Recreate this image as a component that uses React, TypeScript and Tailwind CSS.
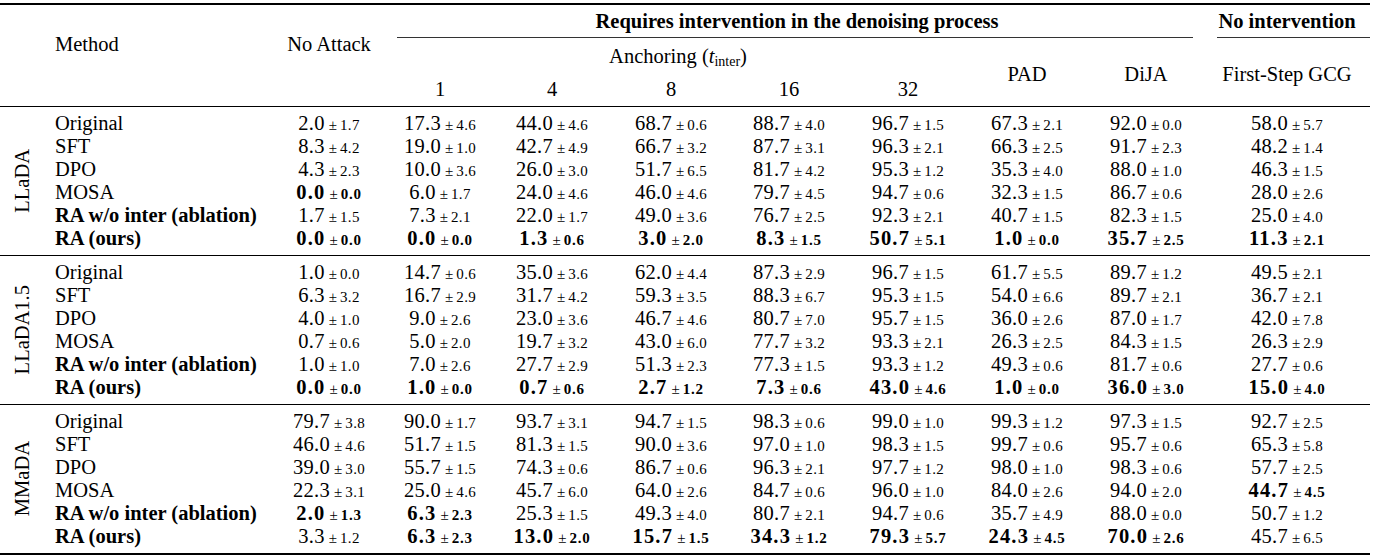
type Row = { name: string; bold?: boolean; vals: string[] };
type Group = { label: string; rows: Row[] };

const groups: Group[] = [
  {
    label: "LLaDA",
    rows: [
      { name: "Original", vals: ["2.0 1.7", "17.3 4.6", "44.0 4.6", "68.7 0.6", "88.7 4.0", "96.7 1.5", "67.3 2.1", "92.0 0.0", "58.0 5.7"] },
      { name: "SFT", vals: ["8.3 4.2", "19.0 1.0", "42.7 4.9", "66.7 3.2", "87.7 3.1", "96.3 2.1", "66.3 2.5", "91.7 2.3", "48.2 1.4"] },
      { name: "DPO", vals: ["4.3 2.3", "10.0 3.6", "26.0 3.0", "51.7 6.5", "81.7 4.2", "95.3 1.2", "35.3 4.0", "88.0 1.0", "46.3 1.5"] },
      { name: "MOSA", vals: ["*0.0 0.0", "6.0 1.7", "24.0 4.6", "46.0 4.6", "79.7 4.5", "94.7 0.6", "32.3 1.5", "86.7 0.6", "28.0 2.6"] },
      { name: "RA w/o inter (ablation)", bold: true, vals: ["1.7 1.5", "7.3 2.1", "22.0 1.7", "49.0 3.6", "76.7 2.5", "92.3 2.1", "40.7 1.5", "82.3 1.5", "25.0 4.0"] },
      { name: "RA (ours)", bold: true, vals: ["*0.0 0.0", "*0.0 0.0", "*1.3 0.6", "*3.0 2.0", "*8.3 1.5", "*50.7 5.1", "*1.0 0.0", "*35.7 2.5", "*11.3 2.1"] },
    ],
  },
  {
    label: "LLaDA1.5",
    rows: [
      { name: "Original", vals: ["1.0 0.0", "14.7 0.6", "35.0 3.6", "62.0 4.4", "87.3 2.9", "96.7 1.5", "61.7 5.5", "89.7 1.2", "49.5 2.1"] },
      { name: "SFT", vals: ["6.3 3.2", "16.7 2.9", "31.7 4.2", "59.3 3.5", "88.3 6.7", "95.3 1.5", "54.0 6.6", "89.7 2.1", "36.7 2.1"] },
      { name: "DPO", vals: ["4.0 1.0", "9.0 2.6", "23.0 3.6", "46.7 4.6", "80.7 7.0", "95.7 1.5", "36.0 2.6", "87.0 1.7", "42.0 7.8"] },
      { name: "MOSA", vals: ["0.7 0.6", "5.0 2.0", "19.7 3.2", "43.0 6.0", "77.7 3.2", "93.3 2.1", "26.3 2.5", "84.3 1.5", "26.3 2.9"] },
      { name: "RA w/o inter (ablation)", bold: true, vals: ["1.0 1.0", "7.0 2.6", "27.7 2.9", "51.3 2.3", "77.3 1.5", "93.3 1.2", "49.3 0.6", "81.7 0.6", "27.7 0.6"] },
      { name: "RA (ours)", bold: true, vals: ["*0.0 0.0", "*1.0 0.0", "*0.7 0.6", "*2.7 1.2", "*7.3 0.6", "*43.0 4.6", "*1.0 0.0", "*36.0 3.0", "*15.0 4.0"] },
    ],
  },
  {
    label: "MMaDA",
    rows: [
      { name: "Original", vals: ["79.7 3.8", "90.0 1.7", "93.7 3.1", "94.7 1.5", "98.3 0.6", "99.0 1.0", "99.3 1.2", "97.3 1.5", "92.7 2.5"] },
      { name: "SFT", vals: ["46.0 4.6", "51.7 1.5", "81.3 1.5", "90.0 3.6", "97.0 1.0", "98.3 1.5", "99.7 0.6", "95.7 0.6", "65.3 5.8"] },
      { name: "DPO", vals: ["39.0 3.0", "55.7 1.5", "74.3 0.6", "86.7 0.6", "96.3 2.1", "97.7 1.2", "98.0 1.0", "98.3 0.6", "57.7 2.5"] },
      { name: "MOSA", vals: ["22.3 3.1", "25.0 4.6", "45.7 6.0", "64.0 2.6", "84.7 0.6", "96.0 1.0", "84.0 2.6", "94.0 2.0", "*44.7 4.5"] },
      { name: "RA w/o inter (ablation)", bold: true, vals: ["*2.0 1.3", "*6.3 2.3", "25.3 1.5", "49.3 4.0", "80.7 2.1", "94.7 0.6", "35.7 4.9", "88.0 0.0", "50.7 1.2"] },
      { name: "RA (ours)", bold: true, vals: ["3.3 1.2", "*6.3 2.3", "*13.0 2.0", "*15.7 1.5", "*34.3 1.2", "*79.3 5.7", "*24.3 4.5", "*70.0 2.6", "45.7 6.5"] },
    ],
  },
];

// value cell: mean in full size, "± std" smaller
function Val({ v }: { v: string }) {
  const bold = v.startsWith("*");
  const [m, s] = v.replace("*", "").split(" ");
  return (
    <div className="text-center whitespace-nowrap">
      <span className={bold ? "font-bold tracking-[1.2px]" : "tracking-[0.3px]"}>{m}</span>
      <span className="ml-[4px] text-[15px]">±</span>
      <span className={bold ? "ml-[3px] text-[15px] font-bold tracking-[0.8px]" : "ml-[3px] text-[15px] tracking-[0.3px]"}>{s}</span>
    </div>
  );
}

function GroupBlock({ g }: { g: Group }) {
  return (
    <div className="grid grid-cols-[44px_224px_122px_100px_124px_114px_122px_116px_122px_116px_166px] auto-rows-[23px] leading-[23px] pt-[5px] pb-[5px]">
      <div className="row-span-6 flex items-center justify-center">
        <span className="[writing-mode:vertical-rl] rotate-180 whitespace-nowrap">{g.label}</span>
      </div>
      {g.rows.map((r) => (
        <div key={r.name} className="contents">
          <div className={r.bold ? "pl-[11px] font-bold whitespace-nowrap" : "pl-[11px] whitespace-nowrap"}>{r.name}</div>
          {r.vals.map((v, i) => (
            <Val key={i} v={v} />
          ))}
        </div>
      ))}
    </div>
  );
}

export default function App() {
  return (
    <div className="w-[1373px] h-[558px] overflow-hidden bg-white text-black text-[20.5px] font-['Liberation_Serif',serif]">
      <div className="w-[1370px] pt-[3px]">
        <div className="h-[2px] bg-black" />

        {/* header */}
        <div className="grid grid-cols-[44px_224px_122px_100px_124px_114px_122px_116px_122px_116px_166px] grid-rows-[33px_34px_34px] leading-[23px]">
          <div className="col-start-2 row-start-1 row-span-3 pl-[11px] pt-[28px]">Method</div>
          <div className="col-start-3 row-start-1 row-span-3 pt-[28px] text-center whitespace-nowrap">No Attack</div>

          <div className="col-start-4 col-end-11 row-start-1 flex flex-col">
            <div className="flex-1 pt-[4.6px] text-center font-bold whitespace-nowrap">
              Requires intervention in the denoising process
            </div>
            <div className="ml-[7px] mr-[11px] h-px bg-[#333]" />
          </div>
          <div className="col-start-11 row-start-1 flex flex-col">
            <div className="flex-1 pt-[4.6px] text-center font-bold whitespace-nowrap">No intervention</div>
            <div className="ml-[13px] h-px bg-[#333]" />
          </div>

          <div className="col-start-4 col-end-9 row-start-2 flex flex-col">
            <div className="flex-1 pt-[6.6px] text-center whitespace-nowrap">
              Anchoring (<span className="italic">t</span>
              <span className="text-[14px] align-[-3px]">inter</span>)
            </div>
            <div className="ml-[7px] mr-[10px] h-px bg-[#333]" />
          </div>

          <div className="col-start-4 row-start-3 pt-[6px] text-center">1</div>
          <div className="col-start-5 row-start-3 pt-[6px] text-center">4</div>
          <div className="col-start-6 row-start-3 pt-[6px] text-center">8</div>
          <div className="col-start-7 row-start-3 pt-[6px] text-center">16</div>
          <div className="col-start-8 row-start-3 pt-[6px] text-center">32</div>

          <div className="col-start-9 row-start-2 row-span-2 pt-[25px] text-center">PAD</div>
          <div className="col-start-10 row-start-2 row-span-2 pt-[25px] text-center">DiJA</div>
          <div className="col-start-11 row-start-2 row-span-2 pt-[25px] text-center whitespace-nowrap">
            First-Step GCG
          </div>
        </div>

        <div className="h-px bg-black" />
        {groups.map((g, i) => (
          <div key={g.label}>
            <GroupBlock g={g} />
            {i < groups.length - 1 ? <div className="h-px bg-black" /> : <div className="h-[2px] bg-black" />}
          </div>
        ))}
      </div>
    </div>
  );
}
